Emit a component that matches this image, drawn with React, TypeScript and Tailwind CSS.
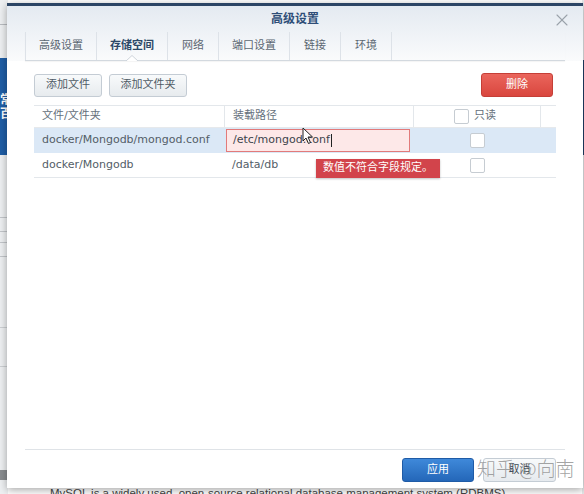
import { X } from "lucide-react"

const font = "font-['DejaVu_Sans','Noto_Sans_CJK_SC',sans-serif]"

const tabs = ["高级设置", "存储空间", "网络", "端口设置", "链接", "环境"]

function Checkbox() {
  return <span className="inline-block w-[15px] h-[15px] bg-white border border-[#c6ccd2] rounded-[2px]" />
}

function GrayButton({ children, w }: { children: React.ReactNode; w: string }) {
  return (
    <button
      className={`${w} h-[23px] flex items-center justify-center rounded-[3px] border border-[#c4ccd4] bg-gradient-to-b from-[#f8fafb] to-[#e7ebee] text-[11px] text-[#4f5b66]`}>
      {children}
    </button>
  )
}

function Cursor() {
  return (
    <svg width="12" height="18" viewBox="0 0 12 18" className="absolute left-[302px] top-[127px]">
      <path d="M1 1 L1 14 L4 11 L6.5 16.5 L8.5 15.5 L6 10 L10.5 10 Z" fill="#fff" stroke="#222" strokeWidth="1" strokeLinejoin="round" />
    </svg>
  )
}

export default function App() {
  return (
    <div className={`relative w-[584px] h-[494px] overflow-hidden bg-white ${font}`}>
      {/* page behind the dialog */}
      <div className="grid grid-cols-[8px_1fr_2px] w-full h-full">
        <div className="h-full flex flex-col bg-[#eef0f2]">
          <div className="h-[25px] border-b border-[#b9bcc0]" />
          <div className="h-[33px]" />
          <div className="h-[97px] bg-[#1f5ea6] flex flex-col justify-center text-[12px] font-bold text-white leading-[14px]">
            <span>常</span>
            <span>百</span>
          </div>
          <div className="h-[62px]" />
          <div className="h-[15px] border-y border-[#c3c6ca]" />
          <div className="h-[10px]" />
          <div className="h-[15px] border-y border-[#c3c6ca]" />
          <div className="h-[70px]" />
          <div className="h-[40px] border-y border-[#cdd0d3]" />
          <div className="flex-1" />
          <div className="h-[10px] bg-[#8a8d90]" />
          <div className="h-[14px]" />
        </div>
        <div className="min-w-0 overflow-hidden flex flex-col justify-end">
          <p className="pl-[42px] h-[8px] leading-[15px] text-[11.5px] text-[#444] font-['Liberation_Sans',sans-serif] whitespace-nowrap">
            MySQL is a widely used, open-source relational database management system (RDBMS).
          </p>
        </div>
        <div className="h-full bg-[linear-gradient(to_bottom,#e6e8ea_60px,#1f3f66_60px,#1f3f66_155px,#e6e8ea_155px)]" />
      </div>

      {/* dialog */}
      <div className="absolute left-[7px] top-[3px] w-[576px] h-[485px] flex flex-col bg-white border-t-[3px] border-[#2c4565] shadow-[0_2px_8px_rgba(0,0,0,0.35)]">
        <div className="bg-gradient-to-b from-[#e4eaf1] to-[#fafbfc]">
          <div className="relative h-[26px] flex items-center justify-center">
            <span className="text-[12px] font-bold text-[#2f4e78]">高级设置</span>
            <X className="absolute right-[11px] top-[4px] w-[20px] h-[20px] text-[#9aa2aa]" strokeWidth={1.3} />
          </div>
          <div className="mx-[18px] h-[29px] flex border-b border-[#d3d9df] shadow-[0_1px_1px_rgba(0,0,0,0.04)]">
            {tabs.map((t, i) => (
              <div
                key={t}
                className={`relative h-full flex items-center text-[11px] border-r border-[#dde2e8] ${t.length === 2 ? "px-[14px]" : "px-[13px]"} ${i === 0 ? "border-l" : ""} ${i === 1 ? "font-bold text-[#2c4867]" : "text-[#5b6671]"}`}>
                {t}
                {i === 1 && (
                  <svg width="12" height="6" viewBox="0 0 12 6" className="absolute left-1/2 -translate-x-1/2 bottom-[-1px]">
                    <path d="M0 6 L6 0.5 L12 6 Z" fill="#fff" />
                    <path d="M0 6 L6 0.5 L12 6" fill="none" stroke="#cdd3da" strokeWidth="1" />
                  </svg>
                )}
              </div>
            ))}
          </div>
        </div>

        <div className="flex-1 px-[27px] pt-[12px]">
          <div className="h-[24px] flex items-center gap-[7px]">
            <GrayButton w="w-[68px]">添加文件</GrayButton>
            <GrayButton w="w-[78px]">添加文件夹</GrayButton>
            <button className="ml-auto mr-[3px] w-[72px] h-[24px] flex items-center justify-center rounded-[3px] border border-[#c53f37] bg-gradient-to-b from-[#ea655c] to-[#d9463e] text-[11px] text-white">
              删除
            </button>
          </div>

          <div className="mt-[8px] border-t border-[#e3e7eb] text-[11px]">
            <div className="grid grid-cols-[190px_189px_128px_15px] h-[22px] border-b border-[#e6e9ec] text-[#65707b]">
              <div className="flex items-center pl-[8px]">文件/文件夹</div>
              <div className="flex items-center pl-[8px] border-l border-[#e3e7eb]">装载路径</div>
              <div className="flex items-center justify-center gap-[5px] border-x border-[#e3e7eb]">
                <Checkbox />
                <span className="pr-[4px]">只读</span>
              </div>
              <div />
            </div>
            <div className="grid grid-cols-[190px_189px_128px_15px] h-[25px] bg-[#dbe8f6] text-[#535d67]">
              <div className="flex items-center pl-[8px]">docker/Mongodb/mongod.conf</div>
              <div className="flex items-center pl-[2px]">
                <div className="w-[184px] h-[23px] flex items-center pl-[6px] border border-[#e27a7a] bg-[#fde8e8] text-[#3c444c]">
                  /etc/mongod.conf
                  <span className="ml-[1px] w-px h-[13px] bg-[#222]" />
                </div>
              </div>
              <div className="flex items-center justify-center">
                <Checkbox />
              </div>
              <div />
            </div>
            <div className="grid grid-cols-[190px_189px_128px_15px] h-[25px] border-b border-[#e3e7eb] text-[#535d67]">
              <div className="flex items-center pl-[8px]">docker/Mongodb</div>
              <div className="flex items-center pl-[8px]">/data/db</div>
              <div className="flex items-center justify-center">
                <Checkbox />
              </div>
              <div />
            </div>
          </div>
        </div>

        <div className="mx-[18px] border-t border-[#dfe3e7] pt-[8px] pb-[6px] px-[9px] flex justify-end gap-[9px]">
          <button className="w-[72px] h-[24px] flex items-center justify-center rounded-[3px] border border-[#1f5ba6] bg-gradient-to-b from-[#3f89da] to-[#2467b9] text-[11px] text-white">
            应用
          </button>
          <button className="w-[73px] h-[24px] flex items-center justify-center rounded-[3px] border border-[#c4ccd4] bg-gradient-to-b from-[#f8fafb] to-[#e6eaee] text-[11px] text-[#3f4a55]">
            取消
          </button>
        </div>
      </div>

      {/* error tooltip */}
      <div className="absolute left-[316px] top-[159px] w-[124px] h-[19px] flex items-center pl-[7px] bg-[#d2444b] text-[11px] text-white shadow-[0_1px_2px_rgba(0,0,0,0.25)]">
        数值不符合字段规定。
      </div>

      <Cursor />

      {/* watermark */}
      <div className="absolute left-[477px] top-[455px] text-[19px] leading-[26px] text-[#8c8c8c]/80 font-['Noto_Sans_CJK_SC',sans-serif] font-light whitespace-nowrap">
        知乎 @向南
      </div>
    </div>
  )
}
